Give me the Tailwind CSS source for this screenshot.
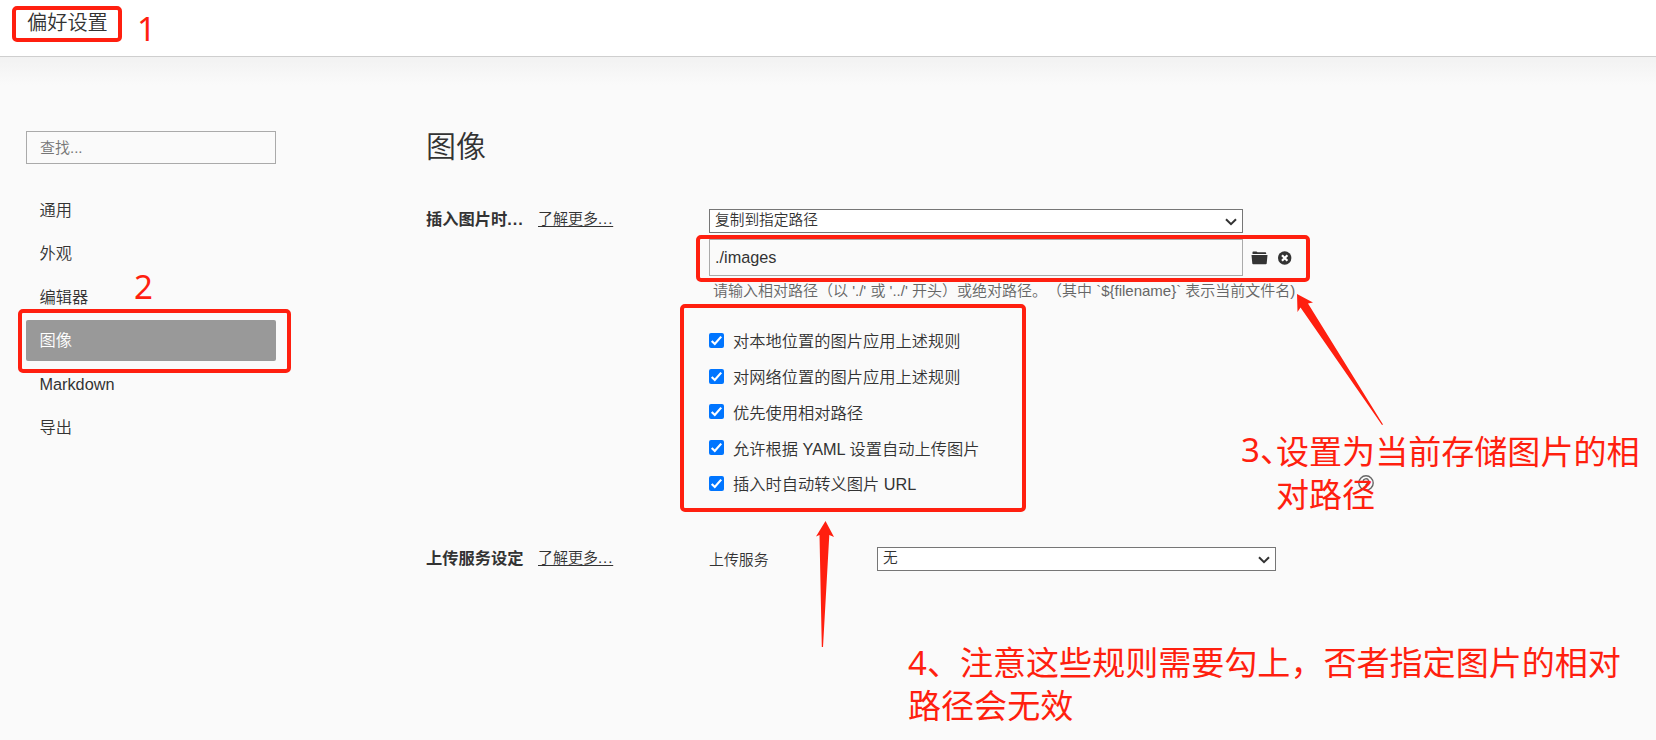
<!doctype html>
<html lang="zh-CN">
    <head>
        <meta charset="UTF-8"/>
        <meta name="viewport" content="width=device-width, initial-scale=1.0">
        <title>偏好设置</title>
        <script src="https://cdn.jsdelivr.net/npm/@tailwindcss/browser@4"></script>
    </head>
    <body class="relative h-[740px] overflow-hidden bg-[#fafafa] text-[#333] font-['Liberation_Sans','Noto_Sans_CJK_SC',sans-serif] text-[16.25px] font-[350] [text-spacing-trim:space-all]">

        <header class="h-[57px] bg-white border-b border-[#cfcfcf] pl-[27px]">
            <h1 class="text-[20.2px] leading-[47px]">偏好设置</h1>
        </header>
        <div class="h-7 bg-linear-to-b from-[#f2f2f2] to-[#fafafa]"></div>

        <div class="flex pl-[26px] pt-[46px]">

            <!-- sidebar -->
            <aside class="w-[250px] shrink-0">
                <input type="text" placeholder="查找..." class="block w-full h-[33px] px-[13px] border border-[#aaa] text-[15px] placeholder:text-[#757575]">
                <nav class="mt-[26px] flex flex-col gap-[2px]">
                    <a class="h-[41.3px] px-[13.5px] leading-[41px]">通用</a>
                    <a class="h-[41.3px] px-[13.5px] leading-[41px]">外观</a>
                    <a class="h-[41.3px] px-[13.5px] leading-[41px]">编辑器</a>
                    <a class="h-[41.3px] px-[13.5px] leading-[41px] rounded-[2px] bg-[#999] text-white">图像</a>
                    <a class="h-[41.3px] px-[13.5px] leading-[42px]">Markdown</a>
                    <a class="h-[41.3px] px-[13.5px] leading-[42px]">导出</a>
                </nav>
            </aside>

            <main class="ml-[150px] w-[900px]">
                <h2 class="text-[30px] leading-[32px]">图像</h2>

                <section class="flex mt-[46px]">
                    <div class="flex w-[283px] shrink-0 leading-[20px]">
                        <strong class="w-[112px] font-bold">插入图片时<span class="tracking-[1px]">...</span></strong>
                        <a class="text-[15px] underline underline-offset-2">了解更多<span class="tracking-[0.9px]">...</span></a>
                    </div>
                    <div>
                        <div class="flex justify-between w-[534px] h-6 border border-[#767676] bg-white pl-[5px] pr-[5px] text-[14.7px] leading-[20px]">
                            <span>复制到指定路径</span>
                            <svg class="mt-[8px]" width="12" height="8" viewBox="0 0 12 8" fill="none" stroke="#333" stroke-width="2"><path d="M1 1.2 6 6.2 11 1.2"/></svg>
                        </div>
                        <div class="flex items-center mt-[6px]">
                            <div class="w-[534px] h-[37px] border border-[#aaa] px-[5px] leading-[35px]">./images</div>
                            <svg class="ml-[8px]" width="17" height="14" viewBox="0 0 17 14" fill="#333"><path d="M1.5 2.5V1.2Q1.5.5 2.3.5H5.5L6.5 1.3H14.3Q15.2 1.3 15.2 2.5V3H1.5ZM.5 4H16.5L15.7 12.5Q15.6 13.3 14.8 13.3H2.2Q1.4 13.3 1.3 12.5Z"/></svg>
                            <svg class="ml-[10px]" width="14" height="14" viewBox="0 0 14 14"><circle cx="6.7" cy="7" r="6.7" fill="#333"/><path d="M4 4.3l5.4 5.4M9.4 4.3 4 9.7" stroke="#fff" stroke-width="2.2"/></svg>
                        </div>
                        <p class="mt-[5px] pl-1 text-[15px] leading-[20px] whitespace-nowrap text-[#666]">请输入相对路径（以 './' 或 '../' 开头）或绝对路径。（其中 `${filename}` 表示当前文件名)</p>

                        <ul id="rules" class="mt-[23px]"></ul>
                    </div>
                </section>

                <section class="flex mt-[44px]">
                    <div class="flex w-[283px] shrink-0 leading-[22px]">
                        <strong class="w-[112px] font-bold">上传服务设定</strong>
                        <a class="text-[15px] underline underline-offset-2">了解更多<span class="tracking-[0.9px]">...</span></a>
                    </div>
                    <div class="w-[168px] shrink-0 text-[14.9px] leading-[26px]">上传服务</div>
                    <div class="flex justify-between w-[399px] h-6 shrink-0 border border-[#767676] bg-white pl-[5px] pr-[5px] text-[14.7px] leading-[20px]">
                        <span>无</span>
                        <svg class="mt-[8px]" width="12" height="8" viewBox="0 0 12 8" fill="none" stroke="#333" stroke-width="2"><path d="M1 1.2 6 6.2 11 1.2"/></svg>
                    </div>
                </section>
            </main>
        </div>

        <!-- help icon -->
        <svg class="absolute left-[1358px] top-[475px]" width="16" height="16" viewBox="0 0 16 16" fill="none" stroke="#666" stroke-width="1.4"><circle cx="8" cy="8" r="7.2"/><path d="M5.3 6.4a2.7 2.5 0 1 1 4 2.1Q8 9.2 8 10.3M8 11.6v1.3"/></svg>

        <!-- annotations drawn over the page -->
        <div class="absolute inset-0 text-[#ff1f0f] text-[33.05px] leading-[43px] font-['Noto_Sans','Noto_Sans_CJK_SC',sans-serif] font-normal whitespace-nowrap">
            <div class="absolute left-[11.5px] top-[6px] w-[110px] h-[36px] border-4 border-[#ff1f0f] rounded-[5px]"></div>
            <div class="absolute left-[17.5px] top-[308.5px] w-[273px] h-[64px] border-4 border-[#ff1f0f] rounded-[5px]"></div>
            <div class="absolute left-[695.5px] top-[234.5px] w-[614px] h-[47px] border-4 border-[#ff1f0f] rounded-[5px]"></div>
            <div class="absolute left-[679.5px] top-[303.5px] w-[346px] h-[208px] border-4 border-[#ff1f0f] rounded-[5px]"></div>
            <svg class="absolute inset-0" width="1656" height="740" fill="#ff1f0f">
                <path d="M1297 294 1313 302.5 1308 303.5 1383 424.5 1382 425 1300.5 307.5 1297.5 312Z"/>
                <path d="M825.5 521 834 537 829.3 535 823 647H821.8L819.5 535 816 536.5Z"/>
            </svg>
            <span class="absolute left-[137px] top-[7px]">1</span>
            <span class="absolute left-[134px] top-[265px]">2</span>
            <span class="absolute left-[1241px] top-[428px]">3</span>
            <span class="absolute left-[1260px] top-[428px] [font-feature-settings:'halt']">、</span>
            <p class="absolute left-[1276px] top-[430px]">设置为当前存储图片的相<br>对路径</p>
            <p class="absolute left-[908px] top-[641px]">4、注意这些规则需要勾上，否者指定图片的相对<br>路径会无效</p>
        </div>

        <script type="text/javascript">
         const rules = [
             '对本地位置的图片应用上述规则',
             '对网络位置的图片应用上述规则',
             '优先使用相对路径',
             '允许根据 YAML 设置自动上传图片',
             '插入时自动转义图片 URL',
         ];

         document.getElementById('rules').innerHTML = rules.map((rule) => `
             <li class="flex h-[35.8px] items-center gap-[9px]">
                 <svg class="mb-[3px]" width="15" height="15" viewBox="0 0 15 15"><rect width="15" height="15" rx="2" fill="#0075ff"/><path d="M2.7 8 5.8 11 12.2 3.6" fill="none" stroke="#fff" stroke-width="2.2"/></svg>
                 <span class="mb-[1px]">${rule}</span>
             </li>
         `).join("");
        </script>
    </body>
</html>
